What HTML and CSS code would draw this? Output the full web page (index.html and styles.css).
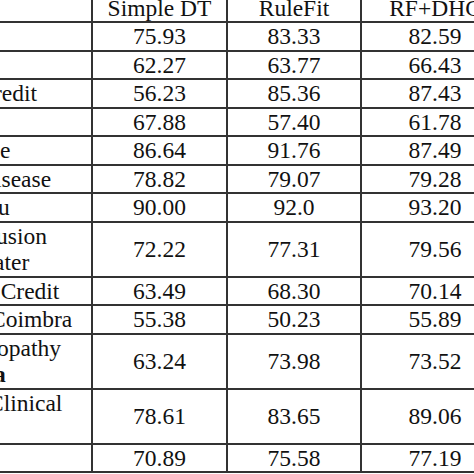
FILE: index.html
```html
<!DOCTYPE html>
<html>
<head>
<meta charset="utf-8">
<link rel="stylesheet" href="styles.css">
</head>
<body>
<table class="results">
  <colgroup>
    <col class="c-name">
    <col class="c-dt">
    <col class="c-rf">
    <col class="c-dhc">
  </colgroup>
  <tr><td class="name"></td><td>Simple DT</td><td>RuleFit</td><td>RF+DHC</td></tr>
  <tr><td class="name"></td><td>75.93</td><td>83.33</td><td>82.59</td></tr>
  <tr><td class="name"></td><td>62.27</td><td>63.77</td><td>66.43</td></tr>
  <tr><td class="name"><span class="frag i-6">redit</span></td><td>56.23</td><td>85.36</td><td>87.43</td></tr>
  <tr><td class="name"></td><td>67.88</td><td>57.40</td><td>61.78</td></tr>
  <tr><td class="name">e</td><td>86.64</td><td>91.76</td><td>87.49</td></tr>
  <tr><td class="name"><span class="frag i-5">isease</span></td><td>78.82</td><td>79.07</td><td>79.28</td></tr>
  <tr><td class="name"><span class="frag i-2">u</span></td><td>90.00</td><td>92.0</td><td>93.20</td></tr>
  <tr><td class="name"><span class="frag i-4">usion</span><span class="frag i-6">ater</span></td><td>72.22</td><td>77.31</td><td>79.56</td></tr>
  <tr><td class="name"><span class="frag i-17">n Credit</span></td><td>63.49</td><td>68.30</td><td>70.14</td></tr>
  <tr><td class="name"><span class="frag i-10">Coimbra</span></td><td>55.38</td><td>50.23</td><td>55.89</td></tr>
  <tr><td class="name"><span class="frag i-3">opathy</span><span class="frag i-6 bold">a</span></td><td>63.24</td><td>73.98</td><td>73.52</td></tr>
  <tr><td class="name"><span class="frag i-12">Clinical</span><span class="frag">&nbsp;</span></td><td>78.61</td><td>83.65</td><td>89.06</td></tr>
  <tr><td class="name"></td><td>70.89</td><td>75.58</td><td>77.19</td></tr>
</table>
</body>
</html>
```

FILE: styles.css
```css
html, body {
  margin: 0;
  padding: 0;
  background: #ffffff;
  overflow: hidden;
}

.results {
  border-collapse: collapse;
  table-layout: fixed;
  width: 509px;
  margin-top: -7.5px;
  font-family: "Liberation Serif", "Times New Roman", serif;
  font-size: 23.5px;
  line-height: 26.5px;
  color: #111111;
}

.c-name { width: 92px; }
.c-dt { width: 135px; }
.c-rf { width: 134px; }
.c-dhc { width: 148px; }

.results td {
  border: 2px solid #333333;
  padding: 0;
  text-align: center;
  vertical-align: middle;
  white-space: nowrap;
}

.results td.name {
  border-left: none;
  text-align: left;
  overflow: hidden;
}

.frag {
  display: block;
}

.i-2 { margin-left: -2px; }
.i-3 { margin-left: -3px; }
.i-4 { margin-left: -4px; }
.i-5 { margin-left: -5px; }
.i-6 { margin-left: -6px; }
.i-10 { margin-left: -10px; }
.i-12 { margin-left: -12px; }
.i-17 { margin-left: -17px; }

.bold { font-weight: bold; }
```
